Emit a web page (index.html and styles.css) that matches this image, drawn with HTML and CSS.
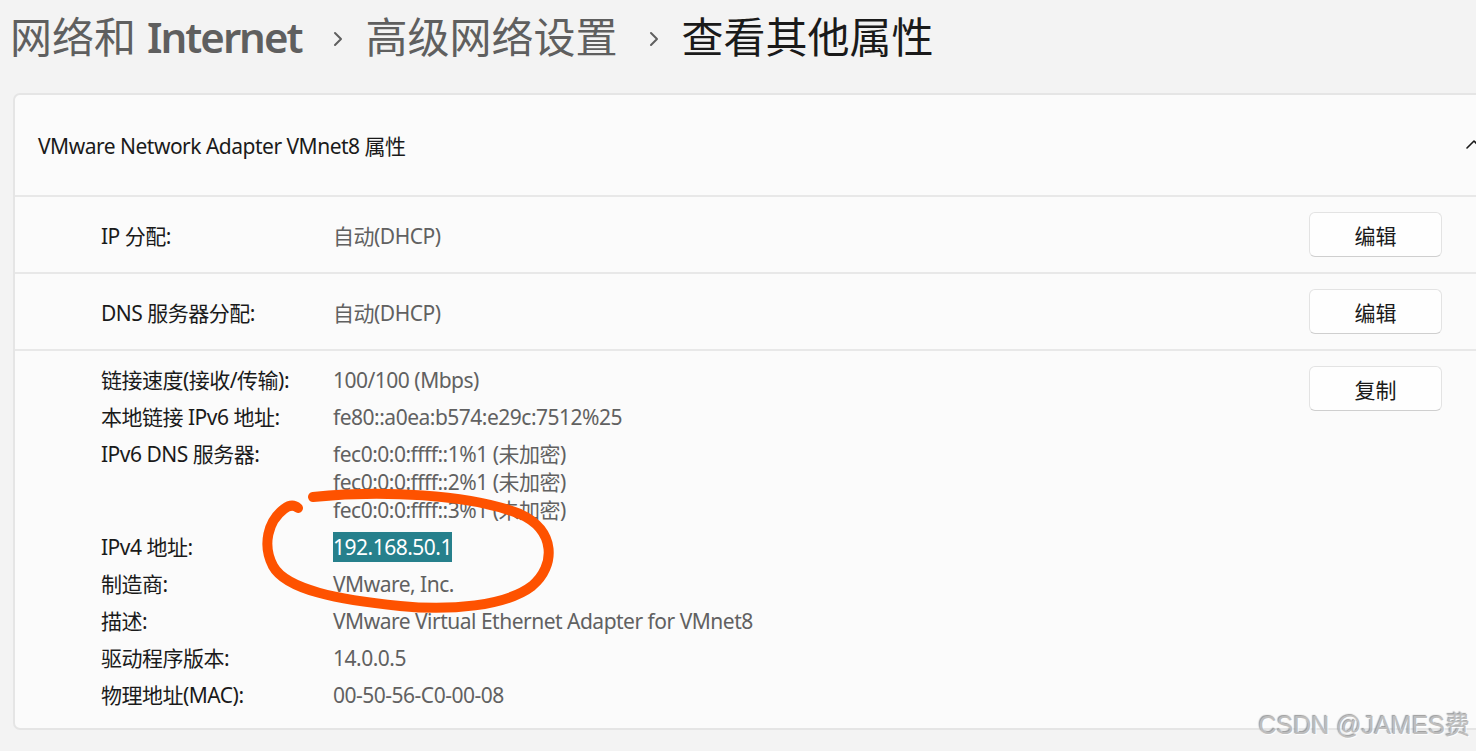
FILE: index.html
```html
<!DOCTYPE html>
<html lang="zh-CN">
<head>
    <meta charset="UTF-8">
    <meta name="viewport" content="width=device-width, initial-scale=1.0">
    <title>查看其他属性</title>
    <link rel="stylesheet" href="styles.css">
</head>
<body>
    <!-- Breadcrumb -->
    <nav class="breadcrumb">
        <span class="crumb">网络和 <b>Internet</b></span>
        <svg class="sep" width="12" height="18" viewBox="0 0 12 18"><path d="M3 3 L9 9 L3 15" fill="none" stroke="#5f5f5f" stroke-width="2" stroke-linecap="round" stroke-linejoin="round"/></svg>
        <span class="crumb">高级网络设置</span>
        <svg class="sep" width="12" height="18" viewBox="0 0 12 18"><path d="M3 3 L9 9 L3 15" fill="none" stroke="#5f5f5f" stroke-width="2" stroke-linecap="round" stroke-linejoin="round"/></svg>
        <span class="crumb current">查看其他属性</span>
    </nav>

    <div class="card">
        <div class="card-header">
            <span class="card-title">VMware Network Adapter VMnet8 属性</span>
            <svg class="chevron-up" width="18" height="12" viewBox="0 0 18 12"><path d="M2 10 L9 3 L16 10" fill="none" stroke="#1a1a1a" stroke-width="1.6" stroke-linecap="round" stroke-linejoin="round"/></svg>
        </div>

        <div class="row">
            <span class="label">IP 分配:</span>
            <span class="value">自动(DHCP)</span>
            <button class="btn">编辑</button>
        </div>

        <div class="row">
            <span class="label">DNS 服务器分配:</span>
            <span class="value">自动(DHCP)</span>
            <button class="btn">编辑</button>
        </div>

        <div class="details">
            <div class="props">
                <span class="label">链接速度(接收/传输):</span>
                <span class="value">100/100 (Mbps)</span>

                <span class="label">本地链接 IPv6 地址:</span>
                <span class="value">fe80::a0ea:b574:e29c:7512%25</span>

                <span class="label">IPv6 DNS 服务器:</span>
                <span class="value multi">
                    <span>fec0:0:0:ffff::1%1 (未加密)</span>
                    <span>fec0:0:0:ffff::2%1 (未加密)</span>
                    <span>fec0:0:0:ffff::3%1 (未加密)</span>
                </span>

                <span class="label">IPv4 地址:</span>
                <span class="value"><span class="selected">192.168.50.1</span></span>

                <span class="label">制造商:</span>
                <span class="value">VMware, Inc.</span>

                <span class="label">描述:</span>
                <span class="value">VMware Virtual Ethernet Adapter for VMnet8</span>

                <span class="label">驱动程序版本:</span>
                <span class="value">14.0.0.5</span>

                <span class="label">物理地址(MAC):</span>
                <span class="value">00-50-56-C0-00-08</span>
            </div>
            <button class="btn">复制</button>
        </div>
    </div>

    <!-- hand-drawn circle over the IPv4 address -->
    <svg class="scribble" width="1476" height="751" viewBox="0 0 1476 751">
        <path d="M313 497 C380 490 470 494 520 514 C556 530 556 566 532 586 C506 606 450 611 400 606 C340 600 286 590 273 566 C262 545 268 521 284 509 Q292 503 298 508" fill="none" stroke="#fe5200" stroke-width="10" stroke-linecap="round" stroke-linejoin="round"/>
    </svg>

    <div class="watermark">CSDN @JAMES费</div>
</body>
</html>
```

FILE: styles.css
```css
body { margin: 0; background: #f3f3f3; font-family: "Noto Sans", "Noto Sans CJK SC", sans-serif; color: #1a1a1a; overflow: hidden; height: 751px; position: relative; }

.breadcrumb { display: flex; align-items: center; padding: 13px 0 0 10px; height: 48px; font-size: 42px; line-height: 48px; color: #5f5f5f; }
.crumb b { font-weight: 600; letter-spacing: -2px; }
.crumb.current { color: #1a1a1a; }
.sep { margin: 4px 22px 0 30px; }

.card { margin: 32px 0 0 13px; width: 1486px; background: #fbfbfb; border: 2px solid #e5e5e5; border-radius: 7px; font-size: 21px; letter-spacing: -0.5px; }
.card-header { height: 100px; display: flex; align-items: center; justify-content: space-between; padding-left: 23px; }
.card-title { color: #1a1a1a; }
.chevron-up { margin-right: 18px; margin-top: -2px; }

.row { height: 75px; border-top: 2px solid #e8e8e8; display: flex; align-items: center; padding: 0 59px 0 86px; }
.label { width: 232px; flex-shrink: 0; color: #1a1a1a; }
.value { color: #616161; flex: 1; }

.btn { width: 133px; height: 45px; background: #fefefe; border: 1px solid #e3e3e3; border-bottom-color: #cfcfcf; border-radius: 6px; font-family: inherit; font-size: 21px; color: #1a1a1a; padding: 0; }

.details { border-top: 2px solid #e8e8e8; display: flex; align-items: flex-start; padding: 15px 59px 19px 86px; }
.props { flex: 1; display: grid; grid-template-columns: 232px auto; row-gap: 9px; line-height: 28px; }
.multi { display: flex; flex-direction: column; }
.selected { background: #26808c; color: #fff; padding: 1px 0; }

.scribble { position: absolute; left: 0; top: 0; pointer-events: none; }

.watermark { position: absolute; right: 6px; bottom: 10px; font-family: "Liberation Sans", "Noto Sans CJK SC", sans-serif; font-size: 25px; color: #b4b4b4; text-shadow: 1px 1px 1px #ffffff, -1px -1px 1px #8a8a8a; opacity: 0.85; }
```
